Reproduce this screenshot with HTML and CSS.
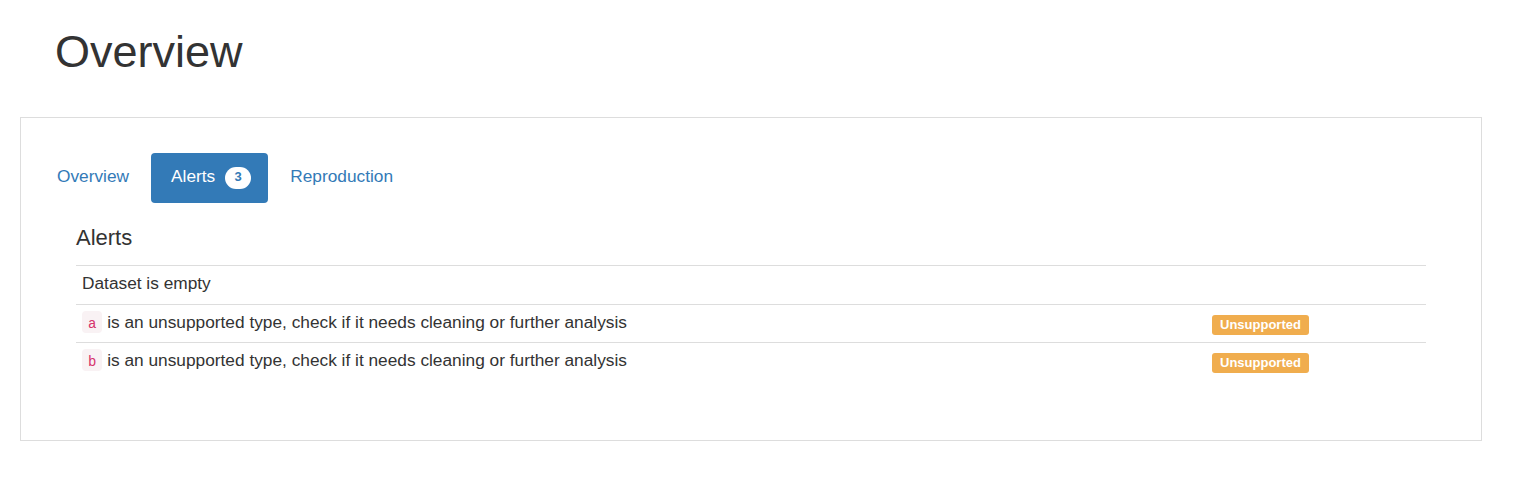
FILE: index.html
```html
<!DOCTYPE html>
<html lang="en">
<head>
  <meta charset="UTF-8" />
  <meta name="viewport" content="width=device-width, initial-scale=1.0"/>
  <title>Overview</title>
  <link rel="stylesheet" href="styles.css">
</head>
<body>
  <h1 class="page-title">Overview</h1>

  <div class="section">
    <ul class="nav-pills">
      <li><a href="#overview">Overview</a></li>
      <li class="active"><a href="#alerts">Alerts <span class="badge">3</span></a></li>
      <li><a href="#reproduction">Reproduction</a></li>
    </ul>

    <div class="tab-content">
      <h4 class="tab-title">Alerts</h4>
      <table class="alerts">
        <tr>
          <td>Dataset is empty</td>
          <td class="tag"></td>
        </tr>
        <tr>
          <td><code>a</code> is an unsupported type, check if it needs cleaning or further analysis</td>
          <td class="tag"><span class="label">Unsupported</span></td>
        </tr>
        <tr>
          <td><code>b</code> is an unsupported type, check if it needs cleaning or further analysis</td>
          <td class="tag"><span class="label">Unsupported</span></td>
        </tr>
      </table>
    </div>
  </div>
</body>
</html>
```

FILE: styles.css
```css
body {
  font-family: 'Liberation Sans', Arial, sans-serif;
  font-size: 17.3px;
  color: #333;
  background: #fff;
  margin: 0;
}
.page-title {
  font-size: 45px;
  font-weight: 500;
  line-height: 1.1;
  margin: 27px 0 0 55px;
}
.section {
  box-sizing: border-box;
  width: 1462px;
  margin: 40px 0 0 20px;
  border: 1px solid #ddd;
  padding: 35px 16px 60px 16px;
}
.nav-pills {
  list-style: none;
  margin: 0;
  padding: 0;
  display: flex;
  gap: 2px;
}
.nav-pills a {
  display: flex;
  align-items: center;
  height: 50px;
  box-sizing: border-box;
  padding: 0 20px 3px;
  font-size: 17.3px;
  color: #337ab7;
  text-decoration: none;
  border-radius: 4px;
}
.nav-pills .active a {
  background: #337ab7;
  color: #fff;
  padding-right: 17px;
}
.badge {
  display: inline-block;
  box-sizing: border-box;
  width: 26px;
  height: 22px;
  margin: 3px 0 0 10px;
  border-radius: 11px;
  background: #fff;
  color: #337ab7;
  font-size: 13px;
  font-weight: bold;
  line-height: 1;
  padding-top: 3px;
  text-align: center;
}
.tab-content {
  padding: 0 39px;
}
.tab-title {
  font-size: 22px;
  font-weight: 500;
  line-height: 1.1;
  margin: 23px 0 15px;
}
.alerts {
  width: 100%;
  border-collapse: collapse;
}
.alerts td {
  border-top: 1px solid #ddd;
  padding: 6px 6px 9px;
  line-height: 22px;
  vertical-align: top;
}
.alerts tr:first-child td {
  padding-bottom: 10px;
}
.alerts .tag {
  width: 208px;
  padding-bottom: 0;
}
code {
  display: inline-block;
  vertical-align: top;
  font-family: 'Liberation Mono', monospace;
  font-size: 14px;
  line-height: 16px;
  color: #d6336c;
  background: #f9f2f4;
  padding: 5px 6px 1px;
  border-radius: 4px;
}
.label {
  display: inline-block;
  vertical-align: top;
  margin-top: 4px;
  background: #f0ad4e;
  color: #fff;
  font-size: 13px;
  font-weight: bold;
  line-height: 1;
  padding: 3px 8px 4px;
  border-radius: 3px;
}
```
